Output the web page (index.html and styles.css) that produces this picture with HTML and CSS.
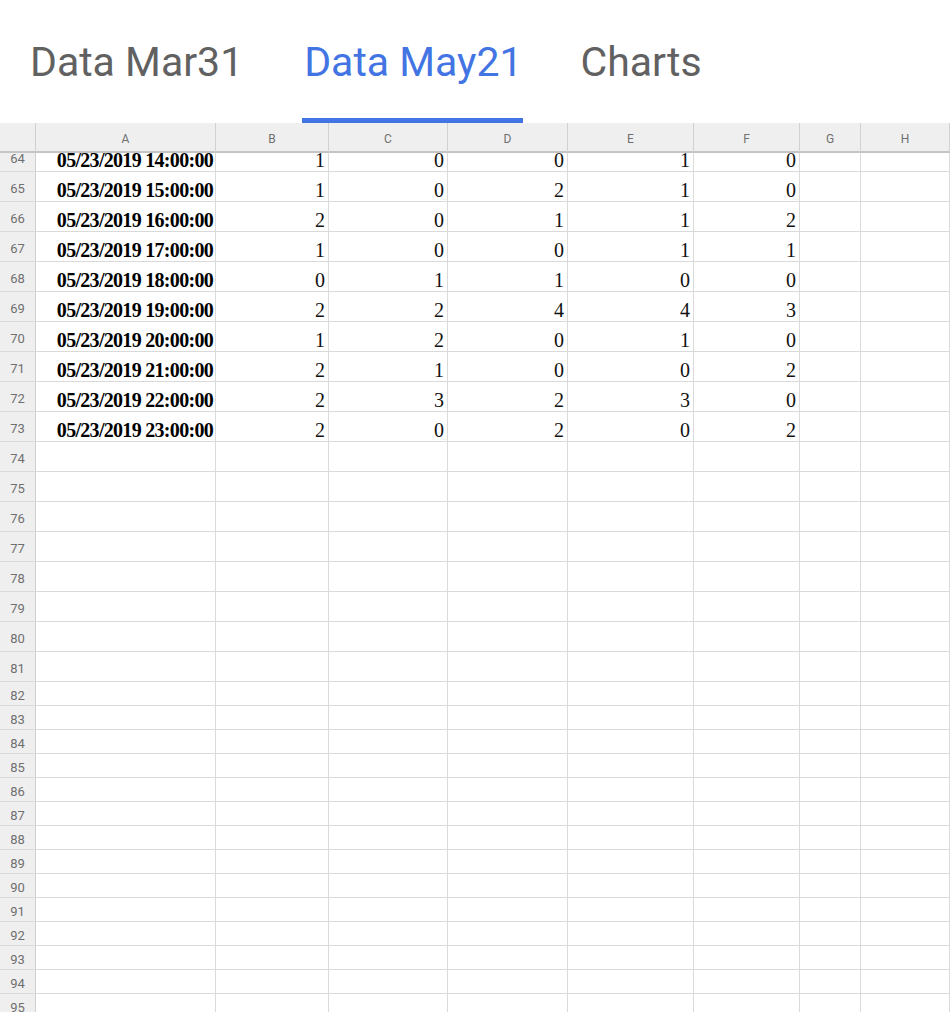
FILE: index.html
```html
<!DOCTYPE html>
<html>
<head>
<meta charset="utf-8">
<link rel="stylesheet" href="styles.css">
</head>
<body>
<div class="tabs">
  <div class="tab">Data Mar31</div>
  <div class="tab active">Data May21</div>
  <div class="tab">Charts</div>
</div>
<div class="sheet">
  <div class="row head">
    <div class="rh"></div>
    <div class="ch">A</div><div class="ch">B</div><div class="ch">C</div><div class="ch">D</div>
    <div class="ch">E</div><div class="ch">F</div><div class="ch">G</div><div class="ch">H</div>
  </div>
  <div class="viewport">
    <div class="rows">
      <div class="row tall"><div class="rh">64</div><div class="c date">05/23/2019 14:00:00</div><div class="c">1</div><div class="c">0</div><div class="c">0</div><div class="c">1</div><div class="c">0</div><div class="c"></div><div class="c"></div></div>
      <div class="row tall"><div class="rh">65</div><div class="c date">05/23/2019 15:00:00</div><div class="c">1</div><div class="c">0</div><div class="c">2</div><div class="c">1</div><div class="c">0</div><div class="c"></div><div class="c"></div></div>
      <div class="row tall"><div class="rh">66</div><div class="c date">05/23/2019 16:00:00</div><div class="c">2</div><div class="c">0</div><div class="c">1</div><div class="c">1</div><div class="c">2</div><div class="c"></div><div class="c"></div></div>
      <div class="row tall"><div class="rh">67</div><div class="c date">05/23/2019 17:00:00</div><div class="c">1</div><div class="c">0</div><div class="c">0</div><div class="c">1</div><div class="c">1</div><div class="c"></div><div class="c"></div></div>
      <div class="row tall"><div class="rh">68</div><div class="c date">05/23/2019 18:00:00</div><div class="c">0</div><div class="c">1</div><div class="c">1</div><div class="c">0</div><div class="c">0</div><div class="c"></div><div class="c"></div></div>
      <div class="row tall"><div class="rh">69</div><div class="c date">05/23/2019 19:00:00</div><div class="c">2</div><div class="c">2</div><div class="c">4</div><div class="c">4</div><div class="c">3</div><div class="c"></div><div class="c"></div></div>
      <div class="row tall"><div class="rh">70</div><div class="c date">05/23/2019 20:00:00</div><div class="c">1</div><div class="c">2</div><div class="c">0</div><div class="c">1</div><div class="c">0</div><div class="c"></div><div class="c"></div></div>
      <div class="row tall"><div class="rh">71</div><div class="c date">05/23/2019 21:00:00</div><div class="c">2</div><div class="c">1</div><div class="c">0</div><div class="c">0</div><div class="c">2</div><div class="c"></div><div class="c"></div></div>
      <div class="row tall"><div class="rh">72</div><div class="c date">05/23/2019 22:00:00</div><div class="c">2</div><div class="c">3</div><div class="c">2</div><div class="c">3</div><div class="c">0</div><div class="c"></div><div class="c"></div></div>
      <div class="row tall"><div class="rh">73</div><div class="c date">05/23/2019 23:00:00</div><div class="c">2</div><div class="c">0</div><div class="c">2</div><div class="c">0</div><div class="c">2</div><div class="c"></div><div class="c"></div></div>
      <div class="row tall"><div class="rh">74</div><div class="c"></div><div class="c"></div><div class="c"></div><div class="c"></div><div class="c"></div><div class="c"></div><div class="c"></div><div class="c"></div></div>
      <div class="row tall"><div class="rh">75</div><div class="c"></div><div class="c"></div><div class="c"></div><div class="c"></div><div class="c"></div><div class="c"></div><div class="c"></div><div class="c"></div></div>
      <div class="row tall"><div class="rh">76</div><div class="c"></div><div class="c"></div><div class="c"></div><div class="c"></div><div class="c"></div><div class="c"></div><div class="c"></div><div class="c"></div></div>
      <div class="row tall"><div class="rh">77</div><div class="c"></div><div class="c"></div><div class="c"></div><div class="c"></div><div class="c"></div><div class="c"></div><div class="c"></div><div class="c"></div></div>
      <div class="row tall"><div class="rh">78</div><div class="c"></div><div class="c"></div><div class="c"></div><div class="c"></div><div class="c"></div><div class="c"></div><div class="c"></div><div class="c"></div></div>
      <div class="row tall"><div class="rh">79</div><div class="c"></div><div class="c"></div><div class="c"></div><div class="c"></div><div class="c"></div><div class="c"></div><div class="c"></div><div class="c"></div></div>
      <div class="row tall"><div class="rh">80</div><div class="c"></div><div class="c"></div><div class="c"></div><div class="c"></div><div class="c"></div><div class="c"></div><div class="c"></div><div class="c"></div></div>
      <div class="row tall"><div class="rh">81</div><div class="c"></div><div class="c"></div><div class="c"></div><div class="c"></div><div class="c"></div><div class="c"></div><div class="c"></div><div class="c"></div></div>
      <div class="row short"><div class="rh">82</div><div class="c"></div><div class="c"></div><div class="c"></div><div class="c"></div><div class="c"></div><div class="c"></div><div class="c"></div><div class="c"></div></div>
      <div class="row short"><div class="rh">83</div><div class="c"></div><div class="c"></div><div class="c"></div><div class="c"></div><div class="c"></div><div class="c"></div><div class="c"></div><div class="c"></div></div>
      <div class="row short"><div class="rh">84</div><div class="c"></div><div class="c"></div><div class="c"></div><div class="c"></div><div class="c"></div><div class="c"></div><div class="c"></div><div class="c"></div></div>
      <div class="row short"><div class="rh">85</div><div class="c"></div><div class="c"></div><div class="c"></div><div class="c"></div><div class="c"></div><div class="c"></div><div class="c"></div><div class="c"></div></div>
      <div class="row short"><div class="rh">86</div><div class="c"></div><div class="c"></div><div class="c"></div><div class="c"></div><div class="c"></div><div class="c"></div><div class="c"></div><div class="c"></div></div>
      <div class="row short"><div class="rh">87</div><div class="c"></div><div class="c"></div><div class="c"></div><div class="c"></div><div class="c"></div><div class="c"></div><div class="c"></div><div class="c"></div></div>
      <div class="row short"><div class="rh">88</div><div class="c"></div><div class="c"></div><div class="c"></div><div class="c"></div><div class="c"></div><div class="c"></div><div class="c"></div><div class="c"></div></div>
      <div class="row short"><div class="rh">89</div><div class="c"></div><div class="c"></div><div class="c"></div><div class="c"></div><div class="c"></div><div class="c"></div><div class="c"></div><div class="c"></div></div>
      <div class="row short"><div class="rh">90</div><div class="c"></div><div class="c"></div><div class="c"></div><div class="c"></div><div class="c"></div><div class="c"></div><div class="c"></div><div class="c"></div></div>
      <div class="row short"><div class="rh">91</div><div class="c"></div><div class="c"></div><div class="c"></div><div class="c"></div><div class="c"></div><div class="c"></div><div class="c"></div><div class="c"></div></div>
      <div class="row short"><div class="rh">92</div><div class="c"></div><div class="c"></div><div class="c"></div><div class="c"></div><div class="c"></div><div class="c"></div><div class="c"></div><div class="c"></div></div>
      <div class="row short"><div class="rh">93</div><div class="c"></div><div class="c"></div><div class="c"></div><div class="c"></div><div class="c"></div><div class="c"></div><div class="c"></div><div class="c"></div></div>
      <div class="row short"><div class="rh">94</div><div class="c"></div><div class="c"></div><div class="c"></div><div class="c"></div><div class="c"></div><div class="c"></div><div class="c"></div><div class="c"></div></div>
      <div class="row short"><div class="rh">95</div><div class="c"></div><div class="c"></div><div class="c"></div><div class="c"></div><div class="c"></div><div class="c"></div><div class="c"></div><div class="c"></div></div>
      <div class="row short"><div class="rh">96</div><div class="c"></div><div class="c"></div><div class="c"></div><div class="c"></div><div class="c"></div><div class="c"></div><div class="c"></div><div class="c"></div></div>
    </div>
  </div>
</div>
</body>
</html>
```

FILE: styles.css
```css
html, body {
  margin: 0;
  padding: 0;
  background: #fff;
  width: 950px;
  height: 1012px;
  overflow: hidden;
}

.tabs {
  display: flex;
  gap: 61px;
  padding-left: 30px;
  height: 123px;
  box-sizing: border-box;
  font-family: Roboto, "Liberation Sans", sans-serif;
  font-size: 41px;
  color: #616161;
}

.tab {
  height: 123px;
  box-sizing: border-box;
  padding-top: 39px;
  line-height: 47px;
  white-space: nowrap;
}

.tab.active {
  color: #4274e3;
  border-bottom: 5px solid #4274e3;
  margin-left: -2px;
  margin-right: -3px;
  padding: 39px 0 0 2px;
}

.sheet {
  width: 950px;
}

.row {
  display: grid;
  grid-template-columns: 36px 180px 113px 119px 120px 126px 106px 61px 89px;
}

.row > div {
  box-sizing: border-box;
  border-right: 1px solid #dadada;
  border-bottom: 1px solid #dadada;
  overflow: hidden;
  white-space: nowrap;
}

.row.head {
  height: 30px;
  background: #efefef;
}

.row.head > div {
  border-right: 1px solid #d2d2d2;
  border-bottom: 2px solid #c4c4c4;
  font-family: Roboto, "Liberation Sans", sans-serif;
  font-size: 12px;
  color: #707070;
  text-align: center;
  line-height: 30px;
  padding-top: 1px;
}

.viewport {
  height: 859px;
  overflow: hidden;
}

.rows {
  margin-top: -11px;
}

.row.tall { height: 30px; }
.row.short { height: 24px; }

.rh {
  background: #efefef;
  font-family: Roboto, "Liberation Sans", sans-serif;
  font-size: 13px;
  color: #6f6f6f;
  display: flex;
  align-items: center;
  justify-content: center;
  padding-top: 3px;
}

.row > div.rh {
  border-right: 1px solid #cfcfcf;
}

.c {
  display: flex;
  align-items: flex-end;
  justify-content: flex-end;
  padding-right: 3px;
  padding-bottom: 2px;
  font-family: "Liberation Serif", "Times New Roman", serif;
  font-size: 20px;
  line-height: 17px;
  color: #111;
}

.c.date {
  font-weight: bold;
  letter-spacing: -0.7px;
  padding-right: 2px;
  color: #000;
}
```
